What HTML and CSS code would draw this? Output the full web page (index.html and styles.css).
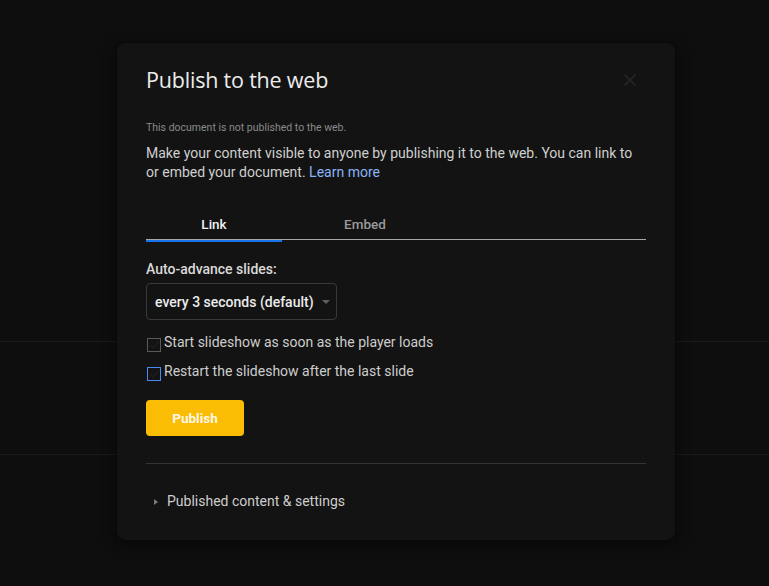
FILE: index.html
```html
<!DOCTYPE html>
<html lang="en">
<head>
<meta charset="utf-8">
<title>Publish to the web</title>
<link rel="stylesheet" href="styles.css">
</head>
<body>
<div class="page">
  <div class="backdrop-band"></div>
  <div class="backdrop-knob"></div>
  <div class="dialog" role="dialog" aria-label="Publish to the web">
    <div class="dialog-head">
      <h1 class="title">Publish to the web</h1>
      <svg class="close" width="14" height="14" viewBox="0 0 14 14" aria-label="Close">
        <path d="M1.5 1.5 L12.5 12.5 M12.5 1.5 L1.5 12.5" stroke="#262626" stroke-width="1.6" fill="none"/>
      </svg>
    </div>
    <p class="status">This document is not published to the web.</p>
    <p class="intro">Make your content visible to anyone by publishing it to the web. You can link to or embed your document. <a class="link" href="#">Learn more</a></p>
    <div class="tabs">
      <div class="tab tab-active">Link</div>
      <div class="tab tab-embed">Embed</div>
    </div>
    <div class="label">Auto-advance slides:</div>
    <div class="select">
      <span>every 3 seconds (default)</span>
      <span class="caret"></span>
    </div>
    <label class="check">
      <span class="box">
        <svg width="12" height="12" viewBox="0 0 12 12"><path d="M2 6 L5 9 L11 2" stroke="#1b1b1b" stroke-width="2" fill="none"/></svg>
      </span>
      <span>Start slideshow as soon as the player loads</span>
    </label>
    <label class="check">
      <span class="box box-focus">
        <svg width="12" height="12" viewBox="0 0 12 12"><path d="M2 6 L5 9 L11 2" stroke="#1b1b1b" stroke-width="2" fill="none"/></svg>
      </span>
      <span>Restart the slideshow after the last slide</span>
    </label>
    <button class="publish" type="button">Publish</button>
    <div class="divider"></div>
    <div class="footer">
      <span class="tri"></span>
      <span>Published content &amp; settings</span>
    </div>
  </div>
</div>
</body>
</html>
```
FILE: styles.css
```css
html, body {
  margin: 0;
  padding: 0;
}
body {
  background: #0e0e0e;
  font-family: Roboto, "Liberation Sans", Arial, sans-serif;
  color: #cfcfcf;
}
.page {
  position: relative;
  width: 769px;
  height: 586px;
  overflow: hidden;
}
.backdrop-band {
  margin-top: 341px;
  height: 112px;
  border-top: 1px solid #1a1a1a;
  border-bottom: 1px solid #1a1a1a;
}
.backdrop-knob {
  position: absolute;
  left: 119px;
  top: 372px;
  width: 22px;
  height: 22px;
  border-radius: 50%;
  background: #3a3a3a;
}
.dialog {
  position: absolute;
  left: 117px;
  top: 43px;
  height: 497px;
  box-sizing: border-box;
  width: 558px;
  padding: 23px 29px 0;
  background: #131313;
  border-radius: 8px;
  box-shadow: 0 4px 12px 4px rgba(0,0,0,0.3), 0 0 2px rgba(0,0,0,0.4);
}
.dialog-head {
  display: flex;
  align-items: center;
  justify-content: space-between;
  height: 28px;
}
.title {
  margin: 0;
  font-family: "Open Sans", Roboto, sans-serif;
  font-weight: 400;
  font-size: 21.5px;
  line-height: 28px;
  color: #ececec;
  letter-spacing: -0.2px;
}
.close {
  margin-right: 9px;
}
.status {
  margin: 26px 0 0;
  font-size: 10.5px;
  line-height: 16px;
  color: #8a8a8a;
}
.intro {
  margin: 8px 0 0;
  font-size: 14px;
  line-height: 19px;
  color: #cfcfcf;
}
.link {
  color: #8ab4f8;
  text-decoration: none;
}
.tabs {
  display: flex;
  margin-top: 27px;
  border-bottom: 1px solid #a8a8a8;
  height: 31px;
  box-sizing: border-box;
}
.tab {
  font-size: 13.5px;
  font-weight: 500;
  line-height: 20px;
  padding-top: 5px;
  text-align: center;
}
.tab-active {
  width: 136px;
  color: #f2f2f2;
  border-bottom: 2px solid #1a73e8;
  margin-bottom: -1px;
  height: 26px;
}
.tab-embed {
  width: 166px;
  color: #9a9a9a;
}
.label {
  margin-top: 19px;
  font-size: 14px;
  font-weight: 500;
  line-height: 20px;
  color: #dadada;
}
.select {
  margin-top: 4px;
  width: 191px;
  height: 37px;
  box-sizing: border-box;
  border: 1px solid #3a3a3a;
  border-radius: 4px;
  display: flex;
  align-items: center;
  padding-left: 8px;
  font-size: 14px;
  font-weight: 500;
  color: #ececec;
}
.caret {
  margin-left: 8px;
  width: 0;
  height: 0;
  border-left: 4px solid transparent;
  border-right: 4px solid transparent;
  border-top: 4px solid #5e5e5e;
  margin-top: 1px;
}
.check {
  display: flex;
  align-items: center;
  gap: 3px;
  font-size: 14px;
  line-height: 20px;
  color: #cdcdcd;
  height: 20px;
}
.select + .check {
  margin-top: 12px;
}
.check + .check {
  margin-top: 9px;
}
.box {
  width: 12px;
  height: 12px;
  border: 1px solid #5a5a5a;
  margin-left: 1px;
  margin-top: 6px;
  display: flex;
  align-items: center;
  justify-content: center;
  overflow: hidden;
}
.box svg {
  flex: none;
}
.box-focus {
  border-color: #4a8af4;
}
.publish {
  margin-top: 19px;
  width: 98px;
  height: 36px;
  border: none;
  border-radius: 4px;
  background: #fbbc04;
  color: #fff8e6;
  font-family: Roboto, "Liberation Sans", sans-serif;
  font-size: 13.5px;
  font-weight: 700;
  cursor: pointer;
  display: block;
}
.divider {
  margin-top: 27px;
  height: 1px;
  background: #343434;
}
.footer {
  margin-top: 27px;
  display: flex;
  align-items: center;
  gap: 9px;
  font-size: 14px;
  line-height: 20px;
  color: #cdcdcd;
  padding-left: 8px;
}
.tri {
  width: 0;
  height: 0;
  border-top: 3.5px solid transparent;
  border-bottom: 3.5px solid transparent;
  border-left: 4px solid #7a7a7a;
  margin-top: 2px;
}
```
